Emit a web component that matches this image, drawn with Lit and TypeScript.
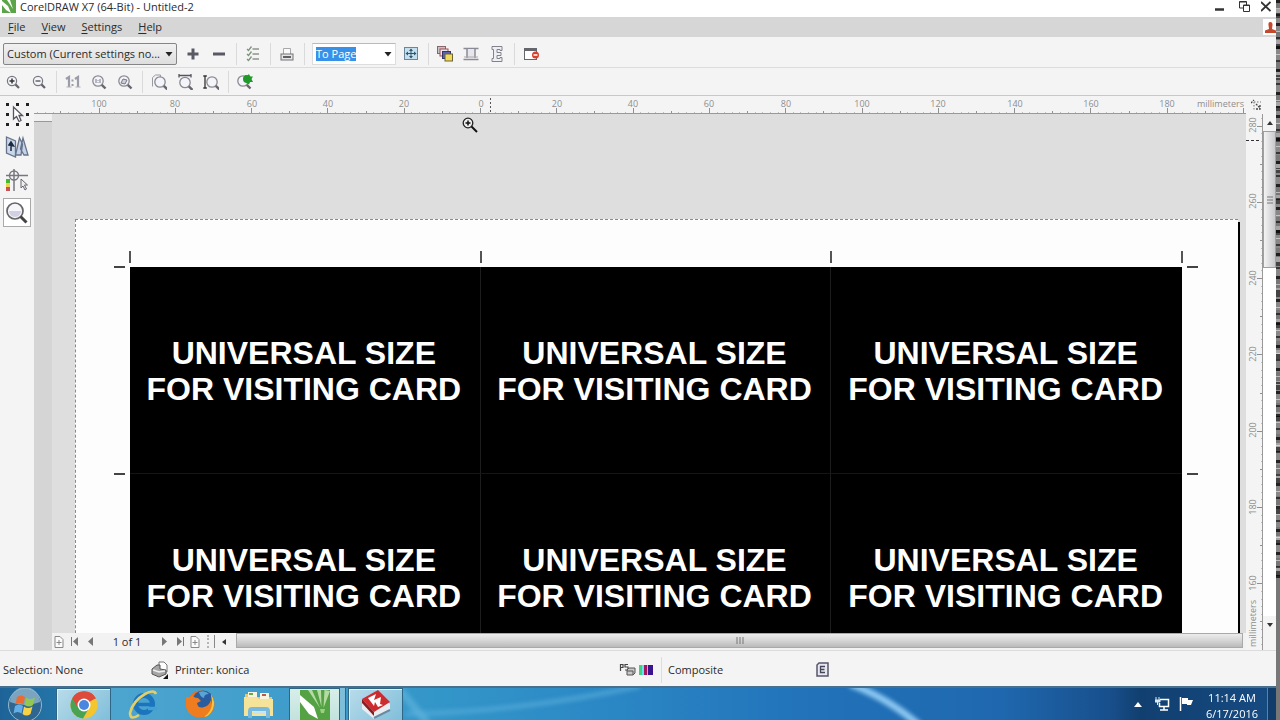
import { LitElement, html, css, svg } from "lit";
import { customElement, query } from "lit/decorators.js";

const PX_PER_20MM = 76.3;

const lens = (inner: unknown, cx = 7, cy = 7) => svg`
  <circle cx=${cx} cy=${cy} r="5.2" fill="#f4f5fb" stroke="#8a8a92" stroke-width="1.3"/>
  <path d="M${cx + 3.8} ${cy + 3.8}L${cx + 7.5} ${cy + 7.5}" stroke="#66666f" stroke-width="2.4"/>
  ${inner}`;

const smallLens = (inner: unknown) => svg`
  <circle cx="7" cy="7" r="4.6" fill="#f4f5fb" stroke="#77777f" stroke-width="1.2"/>
  <path d="M10.4 10.4L14 14" stroke="#66666f" stroke-width="2.2"/>
  ${inner}`;

const icons: Record<string, unknown> = {
  plus: svg`<path d="M8 2.500v11M2.500 8h11" stroke="#585866" stroke-width="3"/>`,
  minus: svg`<path d="M2 8h12" stroke="#585866" stroke-width="3"/>`,
  checks: svg`<path d="M7.500 3h6.500M7.500 8h6.500M7.500 13h6.500" stroke="#a5ada5" stroke-width="2"/><path d="M2 3l1.500 1.500 3-4M2 8l1.500 1.500 3-4M2 13l1.500 1.500 3-4" fill="none" stroke="#7c947c" stroke-width="1.300"/>`,
  print: svg`<path d="M4.500 8V2.500h7V8" fill="#fafafa" stroke="#a8a8a8"/><rect x="2" y="8" width="12" height="6" fill="#e6e6e6" stroke="#70707a"/><path d="M4 11h8" stroke="#333" stroke-width="1.500"/>`,
  fit: svg`<rect x="1.500" y="1.500" width="13" height="12" fill="#c4e0ef" stroke="#6a879b"/><path d="M8 3.500v8M3.500 7.500h9" stroke="#2f566c"/><path d="M8 2.500l2 2.500H6zM8 12.500l2-2.500H6zM2.500 7.500l2.500-2v4zM13.500 7.500l-2.500-2v4z" fill="#2f566c"/>`,
  layers: svg`<rect x=".5" y=".5" width="8" height="7" fill="#c9c3c6" stroke="#85666d"/><rect x="3" y="3" width="8" height="7" fill="#e9e9f4" stroke="#a44a4a"/><rect x="5.500" y="5.500" width="8" height="7" fill="#5a62b0" stroke="#30356d"/><rect x="8" y="8" width="7.500" height="7" fill="#f1d95c" stroke="#6d6435"/>`,
  bleed: svg`<path d="M.5 2.500h15M.5 13.500h15" stroke="#8b8b96" stroke-width="1.500"/><path d="M4 3h8v9H4z" fill="#e6e6ec"/><path d="M4 2v10M12 2v10" stroke="#8b8b96" stroke-width="1.500"/><path d="M1 11h14" stroke="#a9a9b2"/>`,
  emark: svg`<path d="M3 .5h10v4h-2v-1H8v3h4v3H8v3h3v-1h2v4H3v-3h1.500v-9H3z" fill="#eeeef4" stroke="#82828c"/>`,
  close: svg`<rect x="1.500" y="2.500" width="12" height="11" fill="#fff" stroke="#65656d"/><path d="M1 4h13" stroke="#65656d" stroke-width="2"/><circle cx="12.500" cy="9" r="3.500" fill="#d9402c"/><path d="M10.500 9h4" stroke="#fff" stroke-width="1.500"/>`,
  zin: smallLens(svg`<path d="M7 4.500v5M4.500 7h5" stroke="#333" stroke-width="1.500"/>`),
  zout: smallLens(svg`<path d="M4.500 7h5" stroke="#666" stroke-width="1.500"/>`),
  one: svg`<path d="M1 5l3-2v10M10 5l3-2v10" fill="none" stroke="#9c9ca9" stroke-width="2.200"/><path d="M1.500 13h5M10.500 13h5" stroke="#b0b0bb"/><path d="M7.500 5.500v2M7.500 10v2" stroke="#9c9ca9" stroke-width="2"/>`,
  zsel: lens(svg`<path d="M5 5v4M9 5v4M7 6v.8M7 8v.8" stroke="#777783"/>`),
  zpage: lens(svg`<path d="M4 9l2-4 4 1-2 4z" fill="#d0d0dc" stroke="#777783"/>`),
  zdoc: svg`<path d="M1.500 12.500v-9l3-2.500h5v4" fill="#f4f4f4" stroke="#9a9aa3"/>${lens("", 9, 8)}`,
  zwidth: svg`<path d="M2 1.500h12M2 0v3.500M14 0v3.500" stroke="#55555e" stroke-width="1.300"/>${lens("", 8, 8.5)}`,
  zheight: svg`<path d="M2 2v12M.3 2h3.500M.3 14h3.500" stroke="#333" stroke-width="1.300"/>${lens("", 9, 8)}`,
  zcolor: svg`${lens("", 6, 7)}<circle cx="10" cy="5" r="4" fill="#1f9a2a"/><path d="M8 1l2 1 2-2 1 2.500 3 0-1.500 2.500 1.500 3-3 0-1 2.500-3-2z" fill="#1f9a2a"/>`,
};

const icon = (name: string) => html`<svg class="i16" viewBox="0 0 16 16" aria-hidden="true">${icons[name]}</svg>`;
const tool = (name: string, label: string) => html`<button class="tool" aria-label=${label}>${icon(name)}</button>`;
const sep = html`<span class="sep"></span>`;

@customElement("h-ruler")
class HRuler extends LitElement {
  static styles = css`
    :host { display: block; height: 18px; background: #f4f4f4; border-bottom: 1px solid #999; box-sizing: border-box; overflow: hidden; }
    svg { display: block; width: 100%; height: 17px; font: 9px "Open Sans", sans-serif; fill: #8e8e8e; }
  `;
  render() {
    const zero = 446.5;
    const ticks = [];
    for (let mm = -116; mm <= 200; mm += 2) {
      const x = Math.floor(zero + (mm * PX_PER_20MM) / 20) + 0.5;
      const h = mm % 20 === 0 ? 5 : mm % 10 === 0 ? 2 : 1;
      ticks.push(svg`<path d="M${x} 17v${-h}" stroke=${h > 1 ? "#909090" : "#c0c0c0"}/>`);
    }
    const labels = [];
    for (let mm = -100; mm <= 180; mm += 20) {
      labels.push(svg`<text x=${Math.round(zero + (mm * PX_PER_20MM) / 20)} y="11" text-anchor="middle">${Math.abs(mm)}</text>`);
    }
    return html`<svg>${ticks}${labels}<text x="1210" y="11" text-anchor="end">millimeters</text>
      <path d="M456.500 2v15" stroke="#555" stroke-dasharray="2 2"/></svg>`;
  }
}

@customElement("v-ruler")
class VRuler extends LitElement {
  static styles = css`
    :host { display: block; background: #f4f4f4; border-right: 1px solid #999; box-sizing: border-box; overflow: hidden; position: relative; }
    svg { position: absolute; inset: 0; width: 100%; height: 100%; font: 9px "Open Sans", sans-serif; fill: #8e8e8e; }
  `;
  render() {
    const top = 12;
    const ticks = [];
    for (let mm = 282; mm >= 144; mm -= 2) {
      const y = Math.floor(top + ((280 - mm) * PX_PER_20MM) / 20) + 0.5;
      const w = mm % 20 === 0 ? 5 : mm % 10 === 0 ? 2 : 1;
      ticks.push(svg`<path d="M16 ${y}h${-w}" stroke=${w > 1 ? "#909090" : "#c0c0c0"}/>`);
    }
    const labels = [];
    for (let mm = 280; mm >= 160; mm -= 20) {
      const y = Math.round(top + ((280 - mm) * PX_PER_20MM) / 20);
      labels.push(svg`<text transform="translate(10 ${y - 1}) rotate(-90)" text-anchor="middle">${mm}</text>`);
    }
    return html`<svg>${ticks}${labels}<text transform="translate(10 533) rotate(-90)">millimeters</text>
      <path d="M0 26.500h15" stroke="#333" stroke-dasharray="3 2"/></svg>`;
  }
}

@customElement("print-sheet")
class PrintSheet extends LitElement {
  static styles = css`
    :host { display: block; box-sizing: border-box; height: 640px; background: #fdfdfd; border: 1px dashed #8a8a8a; border-right: 0; box-shadow: 2px 3px 0 #000; padding: 31px 40px 0 38px; }
    .row { display: grid; grid-template-columns: 16px 1fr 16px; }
    .ticks { display: flex; justify-content: space-between; height: 12px; grid-column: 2; margin: 0 -1px 4px -1px; }
    .v { width: 2px; background: #555; }
    .h { height: 2px; width: 11px; background: #444; margin-top: -1px; }
    .right { justify-self: end; }
    .cards { display: grid; grid-template-columns: repeat(3, 1fr); background: #000; }
    .card { box-sizing: border-box; height: 207px; padding: 1px 2px 0 0; border-right: 1px solid #1d1d1d; border-bottom: 1px solid #151515; display: flex; align-items: center; justify-content: center; text-align: center; color: #fff; font: bold 32px/36px "Liberation Sans", Arial, sans-serif; white-space: nowrap; }
    .card:last-child { border-right: 0; }
  `;
  render() {
    const row = html`<div class="row"><span class="h"></span>
      <div class="cards">${[0, 1, 2].map(() => html`<div class="card">UNIVERSAL SIZE<br>FOR VISITING CARD</div>`)}</div>
      <span class="h right"></span></div>`;
    return html`<div class="row"><div class="ticks">${[0, 1, 2, 3].map(() => html`<span class="v"></span>`)}</div></div>${row}${row}`;
  }
}

@customElement("task-bar")
class TaskBar extends LitElement {
  static styles = css`
    :host { display: grid; height: 34px; box-sizing: border-box; border-top: 2px solid #486f8c; overflow: hidden; font: 11px/16px "Open Sans", sans-serif; color: #fff;
      background: linear-gradient(90deg, #1d6397 0, #2474a8 55px, #4ea6cf 90px, #3f9ccb 300px, #3396c9 440px, #2b86c4 620px, #2273ba 800px, #1f68af 1000px, #184f8c 1110px, #113f70 1140px, #164b82 1276px); }
    .glow, .bar { grid-area: 1 / 1; min-width: 0; }
    .glow { width: 100%; height: 32px; }
    .bar { display: flex; height: 32px; }
    button { appearance: none; border: 0; padding: 0; background: none; box-sizing: border-box; height: 32px; width: 58px; display: grid; place-items: center; }
    svg { display: block; overflow: hidden; }
    .start { width: 56px; padding-right: 6px; }
    .on { width: 55px; background: linear-gradient(135deg, #b9dcea, #7fbeda); border: 1px solid #2f6685; border-bottom: 0; box-shadow: inset 1px 1px 0 #d9f2fb; }
    .first { margin-right: 3px; }
    .active { width: 51px; background: linear-gradient(#d8eee9, #c2e2dd); border: 1px solid #2f6685; border-bottom: 0; margin-left: 1px; }
    .stack { margin: 0 2px 0 0; width: 5px; border-right: 1px solid #2f6685; background: #7fbeda; }
    .tray { margin-left: auto; display: flex; align-items: center; }
    .tray button { width: 24px; }
    .clock { text-align: center; line-height: 16px; width: 60px; padding-top: 3px; margin: 0 5px 0 4px; }
    .desk { border-left: 1px solid #5585ad; width: 8px; height: 32px; background: #123d6b; }
  `;
  render() {
    return html`
      <svg class="glow" aria-hidden="true">
        <defs><filter id="b"><feGaussianBlur stdDeviation="2"/></filter></defs>
        <g filter="url(#b)" fill="none">
          <path d="M850 -4Q888 10 920 38" stroke="#8cc8f2" stroke-width="7"/>
          <path d="M405 26Q520 24 640 -2" stroke="#54aad8" stroke-width="5" opacity=".7"/>
          <path d="M400 2L428 36" stroke="#62b6dd" stroke-width="8" opacity=".6"/>
        </g>
      </svg>
      <div class="bar">
        <button class="start" aria-label="Start"><svg width="36" height="32" viewBox="0 0 36 32">
          <circle cx="18" cy="17" r="16.500" fill="#2f668f" stroke="#93b9cf"/><path d="M3 14a15 15 0 0 1 30 0q-15 6-30 0z" fill="#8db4ca" opacity=".8"/>
          <path d="M10 9q4-3 8 0l-1.500 7.500q-4-3-8 0z" fill="#ea6c33"/><path d="M19 9.500q4 3 9 0l-2 7.500q-4 3-8.500 0z" fill="#92c750"/>
          <path d="M8 18q4-3 8 0l-1.500 7.500q-4-3-8 0z" fill="#62aee8"/><path d="M17 18.500q4 3 8.500 0l-2 7.500q-4 3-8 0z" fill="#f7d148"/></svg></button>
        <button class="on first" aria-label="Chrome"><svg width="28" height="28" viewBox="0 0 28 28">
          <circle cx="14" cy="14" r="13.500" fill="#f3c62f"/><path d="M14 14L2.300 7.200A13.500 13.500 0 0 1 25.700 7.200z" fill="#dc4b3c"/><path d="M2.300 7.200A13.500 13.500 0 0 0 13 27.500L19 17z" fill="#4aa353"/><path d="M14 7.500h12A13.500 13.500 0 0 0 2.300 7.200L8 17z" fill="#dc4b3c"/>
          <circle cx="14" cy="14" r="6.500" fill="#fff"/><circle cx="14" cy="14" r="5" fill="#4a86e0"/></svg></button>
        <button aria-label="Internet Explorer"><svg width="30" height="30" viewBox="0 0 30 30">
          <circle cx="16" cy="15" r="8.500" fill="none" stroke="#1b74bd" stroke-width="5"/><path d="M10 15.500h17" stroke="#1b74bd" stroke-width="3.500"/><path d="M20 19.500h9" stroke="#43a0d2" stroke-width="3.500"/>
          <path d="M28 5q-2-5-11 0Q5 12 2 24q0 8 9 2" fill="none" stroke="#e2cf69" stroke-width="2.600"/></svg></button>
        <button aria-label="Firefox"><svg width="30" height="30" viewBox="0 0 30 30">
          <circle cx="15" cy="15" r="13.500" fill="#e8701d"/><circle cx="17" cy="12" r="10.500" fill="#2a5ca0"/><path d="M13 3q6-2 10 2-5 0-5 4-4-1-5-6z" fill="#58a5d6"/>
          <path d="M2 8q3 1 4-3 1 4 6 4l3 3-4 2q1 6 7 4 5-1 7-7 4 12-5 16-10 4-17-3-5-6-3-15z" fill="#ef7d1f"/><path d="M25 5q5 8 2 15-3 7-9 8 8-6 8-14z" fill="#f8c33a"/></svg></button>
        <button aria-label="Explorer"><svg width="32" height="30" viewBox="0 0 32 30">
          <path d="M2 5h10l2 3h15v19H2z" fill="#e4c96b"/><path d="M5 3h9v6H5zM17 4h9v6h-9z" fill="#f8f4e0"/><path d="M6 4h4v2H6z" fill="#6aa84f"/><path d="M19 5h4v2h-4z" fill="#c05848"/>
          <path d="M1 8h13l2 2h14v17H1z" fill="#f6e39a"/><path d="M7 29v-7q0-2 2-2h14q2 0 2 2v7" fill="none" stroke="#7ab9de" stroke-width="4"/><path d="M10 24h12" stroke="#c3e4f5" stroke-width="2"/></svg></button>
        <button class="active" aria-label="CorelDRAW"><svg width="30" height="30" viewBox="0 0 30 30">
          <path d="M0 0h30v30H0z" fill="#55a244"/><path d="M0 5l14 12 4 12-9-5L0 12z" fill="#fff"/><path d="M8 0l12 18L12 0zM17 0l4.500 17L21 0zM30 1l-6.500 17 1-18z" fill="#b5dba4"/><path d="M20 19h5l-1 4h-3z" fill="#9bcf86"/></svg></button>
        <span class="stack"></span>
        <button class="on" aria-label="Graphics app"><svg width="32" height="30" viewBox="0 0 32 30">
          <path d="M2 12l17-10 11 12v7L14 29 2 19z" fill="#e8edf2"/><path d="M14 28l16-8" stroke="#6889a0" stroke-width="2"/><path d="M2 9L18 0l12 12-16 10z" fill="#cf2a2e"/><path d="M2 9l12 13v4L2 13z" fill="#8d1c22"/><path d="M8 8l8-4-2 6 7-3-1 7 3 1-5 2-3-5-1 4z" fill="#fff"/></svg></button>
        <div class="tray">
          <button aria-label="Show hidden icons"><svg width="8" height="5"><path d="M4 0l4 5H0z" fill="#fff"/></svg></button>
          <button aria-label="Network"><svg width="15" height="14" viewBox="0 0 15 14"><path d="M5 2.500h8.500v7H4.500V6" fill="none" stroke="#fff" stroke-width="1.500"/><path d="M5 13h8M9 10v3" stroke="#fff" stroke-width="1.500"/><path d="M1 0v3M4 0v3M0 3h5v2H0zM2.500 5v3" stroke="#dfe9f3" fill="#dfe9f3"/></svg></button>
          <button aria-label="Action Center"><svg width="15" height="14" viewBox="0 0 15 14"><path d="M1.500 0v14" stroke="#fff" stroke-width="1.500"/><path d="M3 1h6v2h5l-2 5H8V7H3z" fill="#fff"/></svg></button>
          <div class="clock">11:14 AM<br>6/17/2016</div>
          <span class="desk"></span>
        </div>
      </div>`;
  }
}

@customElement("app-root")
class AppRoot extends LitElement {
  static styles = css`
    :host { display: flex; height: 100vh; overflow: hidden; background: #f4f4f4; color: #2b2b2b; font: 11px/16px "Open Sans", sans-serif; }
    .app { flex: 1; min-width: 0; display: flex; flex-direction: column; }
    .edge { width: 4px; background:
      linear-gradient(transparent 578px, #777 578px),
      repeating-linear-gradient(rgba(0,0,0,.75) 0 3px, transparent 3px 8px, rgba(255,255,255,.5) 8px 9px, transparent 9px 14px, rgba(0,0,0,.6) 14px 16px, transparent 16px 23px),
      repeating-linear-gradient(#777 0 9px, #a4a4a4 9px 13px, #444 13px 18px, #888 18px 31px); }
    button { appearance: none; background: none; border: 0; padding: 0; margin: 0; font: inherit; color: inherit; display: grid; place-items: center; }
    svg { display: block; }
    .i16 { width: 16px; height: 16px; }
    .title { height: 17px; background: #fff; display: flex; align-items: flex-start; gap: 4px; padding-left: 2px; line-height: 14px; }
    .win { margin-left: auto; display: flex; }
    .win button { width: 24px; height: 14px; }
    .win button:last-child { width: 20px; }
    .menu { height: 20px; background: #d6d6d6; display: flex; align-items: center; }
    .menu button { padding: 0 8px; }
    .menu u { text-underline-offset: 2px; }
    .menu .user { margin-left: auto; padding: 0; width: 13px; height: 16px; background: #fff; }
    .bar { display: flex; align-items: center; box-sizing: border-box; border-bottom: 1px solid #dcdcdc; }
    .bar1 { height: 31px; padding: 4px 0 0 3px; }
    .bar2 { height: 28px; border-bottom-color: #c8c8c8; }
    .tool { width: 26px; height: 24px; }
    .sep { width: 1px; height: 22px; margin: 0 3px 0 4px; background: #dadada; }
    .preset { display: grid; width: 174px; margin-right: 3px; align-items: center; }
    .preset select { grid-area: 1 / 1; appearance: none; box-sizing: border-box; width: 100%; height: 22px; border: 1px solid #858585; border-radius: 2px; background: linear-gradient(#f1f1f1, #dedede); font: inherit; color: inherit; padding: 0 0 0 3px; }
    .preset svg { grid-area: 1 / 1; justify-self: end; margin-right: 4px; pointer-events: none; }
    .zoom { display: flex; box-sizing: border-box; width: 84px; height: 22px; margin: 0 2px 0 4px; background: #fff; border: 1px solid #ddd; border-top-color: #b4bcc2; }
    .zoom input { flex: 1; min-width: 0; border: 0; outline: 0; padding: 0 0 0 3px; font: inherit; line-height: 14px; color: #222; background: none; }
    .zoom input::selection { background: #3891e9; color: #fff; }
    .zoom button { width: 14px; }
    .work { flex: 1; min-height: 0; display: grid; grid-template-columns: 34px 18px 1fr 17px 13px; grid-template-rows: 18px 1fr 17px; }
    .tools { grid-row: 1 / 4; display: flex; flex-direction: column; align-items: center; gap: 4px; padding: 3px 1px 0 0; box-sizing: border-box; }
    .tools button { width: 28px; height: 29px; box-sizing: border-box; }
    .tools .sel { background: #fff; border: 1px solid #aaa; }
    h-ruler { grid-column: 2 / 4; }
    .origin { grid-column: 4 / 6; display: flex; align-items: center; padding-left: 5px; }
    .gutter { grid-area: 2 / 2 / 4 / 3; background: #d5d5d5; }
    .stub { height: 8px; background: #f0f0f0; border-bottom: 1px solid #999; box-sizing: border-box; }
    .canvas { grid-area: 2 / 3; background: #dedede; overflow: hidden; padding: 105px 8px 0 23px; position: relative; }
    .cursor { position: absolute; left: 409px; top: 2px; }
    v-ruler { grid-area: 2 / 4 / 4 / 5; }
    .vs { grid-area: 2 / 5; display: flex; flex-direction: column; background: #fff; }
    .vs button { height: 17px; background: #f4f4f4; }
    .vthumb { height: 137px; box-sizing: border-box; border: 1px solid #a0a0a0; background: linear-gradient(90deg, #f3f3f3, #c9c9cd); display: grid; place-items: center; }
    .grow { flex: 1; }
    .nav { grid-area: 3 / 3; display: flex; min-width: 0; background: #f2f2f2; }
    .nav button { width: 16px; height: 17px; }
    .nav .add { width: 14px; }
    .pages { width: 58px; text-align: center; line-height: 18px; }
    .grip { width: 5px; margin: 2px 1px 2px 5px; border-left: 2px dotted #b5b5b5; border-right: 1px solid #888; }
    .hthumb { flex: 1; height: 15px; margin: 0 3px 0 4px; box-sizing: border-box; border: 1px solid #a9a9a9; background: linear-gradient(#ececec, #d8d8d8 45%, #bababa); display: grid; place-items: center; }
    .status { height: 36px; box-sizing: border-box; border-top: 1px solid #dcdcdc; display: flex; align-items: center; padding: 2px 3px 0; }
    .s1 { width: 148px; }
    .s2 { width: 468px; display: flex; align-items: center; gap: 7px; }
    .s3 { width: 42px; display: flex; align-items: center; gap: 3px; }
    .s4 { width: 148px; border-left: 1px solid #ddd; padding-left: 6px; line-height: 26px; }
  `;

  @query(".zoom input") zoomBox!: HTMLInputElement;

  firstUpdated() {
    this.zoomBox.focus();
    this.zoomBox.select();
  }

  render() {
    const menus = [["F", "ile"], ["V", "iew"], ["S", "ettings"], ["H", "elp"]];
    const arrow = html`<svg width="8" height="5" aria-hidden="true"><path d="M.5 0h7L4 4.500z" fill="#222"/></svg>`;
    const tri = (d: string, label: string) => html`<button aria-label=${label}><svg width="9" height="9" viewBox="0 0 9 9"><path d=${d} fill="#777"/></svg></button>`;
    const addPage = html`<button class="add" aria-label="Add page"><svg width="10" height="12" viewBox="0 0 10 12"><path d="M1 .5h5l3 3v8H1zM5 4v5M2.500 6.500h5" fill="#fafafa" stroke="#888"/></svg></button>`;
    return html`
      <div class="app">
        <header class="title">
          <svg width="14" height="14" viewBox="0 0 14 14"><path d="M0 0h14v13H0z" fill="#5ba548"/><path d="M0 1l6 5 3 7-5-3-4-5zM5 0l6 9-3-9z" fill="#fff"/></svg>
          <span>CorelDRAW X7 (64-Bit) - Untitled-2</span>
          <div class="win">
            <button aria-label="Minimize"><svg width="10" height="12"><path d="M0 8.500h9" stroke="#333" stroke-width="2.500"/></svg></button>
            <button aria-label="Restore"><svg width="11" height="12"><path d="M4 7H.5V.5h7V4M.5 1h7M4.500 4h6v6.500h-6zM4.500 4.500h6" fill="none" stroke="#333"/></svg></button>
            <button aria-label="Close"><svg width="10" height="12"><path d="M0 1l9.500 9M9.500 1L0 10" stroke="#333" stroke-width="1.800"/></svg></button>
          </div>
        </header>
        <nav class="menu">
          ${menus.map(([a, b]) => html`<button><span><u>${a}</u>${b}</span></button>`)}
          <button class="user" aria-label="Account"><svg width="12" height="14"><path d="M6 2q3 0 2.500 3L8 9l4 1.500V13H1v-2.500L5 9l-.5-4Q4 2 6 2z" fill="#c3492c"/></svg></button>
        </nav>
        <div class="bar bar1">
          <label class="preset"><select aria-label="Print style"><option>Custom (Current settings no...</option></select>${arrow}</label>
          ${tool("plus", "Add print style")}${tool("minus", "Delete print style")}${sep}
          ${tool("checks", "Print options")}${sep}${tool("print", "Print")}${sep}
          <div class="zoom"><input aria-label="Zoom level" value="To Page"><button aria-label="Zoom levels">${arrow}</button></div>
          ${tool("fit", "Full screen")}${sep}
          ${tool("layers", "Separations")}${tool("bleed", "Invert")}${tool("emark", "Mirror")}${sep}${tool("close", "Close preview")}
        </div>
        <div class="bar bar2">
          ${tool("zin", "Zoom in")}${tool("zout", "Zoom out")}${sep}
          ${tool("one", "Zoom 1:1")}${tool("zsel", "Zoom to selected")}${tool("zpage", "Zoom to fit")}${sep}
          ${tool("zdoc", "Zoom to page")}${tool("zwidth", "Zoom to width")}${tool("zheight", "Zoom to height")}${sep}
          ${tool("zcolor", "Color preview")}
        </div>
        <main class="work">
          <div class="tools">
            <button aria-label="Pick tool"><svg width="24" height="24" viewBox="0 0 24 24"><path d="M1 1h3v3H1zM11 1h3v3h-3zM21 1h3v3h-3zM1 11h3v3H1zM21 11h3v3h-3zM1 21h3v3H1zM11 21h3v3h-3zM21 21h3v3h-3z" fill="#222"/><path d="M8.500 5v12l3-2.500 2.500 5 2-1-2-5h3.500z" fill="#fff" stroke="#555560" stroke-width="1.300"/></svg></button>
            <button aria-label="Imposition"><svg width="24" height="24" viewBox="0 0 24 24"><path d="M1.500 2l9 4v16l-9-4z" fill="#c9d7ea" stroke="#66738a" stroke-width="1.300"/><path d="M10.500 20l4-17 3 6-1.500 11zM15.500 14l2.500-11 5 17h-4z" fill="#c5d3e8" stroke="#66738a" stroke-width="1.300"/><path d="M6 16V9M4 10l2-3 2.500 4z" stroke="#1c2940" stroke-width="1.500" fill="#1c2940"/></svg></button>
            <button aria-label="Marks placement"><svg width="24" height="24" viewBox="0 0 24 24"><path d="M1 7.500h22M9 1v22" stroke="#777780" stroke-width="1.500"/><circle cx="9" cy="7.500" r="4.500" fill="none" stroke="#777780" stroke-width="1.400"/><path d="M1 11h4v4H1z" fill="#45b82e"/><path d="M1 15h4v4H1z" fill="#ebd44c"/><path d="M1 19h4v4H1z" fill="#c95252"/><path d="M16 11v9l2-2 2 4 1.500-1-2-4h3z" fill="#eee" stroke="#666670"/></svg></button>
            <button class="sel" aria-label="Zoom tool"><svg width="24" height="24" viewBox="0 0 24 24"><circle cx="10" cy="10" r="8" fill="#f6f6fb" stroke="#666" stroke-width="1.700"/><path d="M4 10h12a6 6 0 0 1-12 0z" fill="#d1d1e2"/><path d="M15.500 15.500l6 6" stroke="#444" stroke-width="3"/></svg></button>
          </div>
          <h-ruler></h-ruler>
          <div class="origin"><svg width="10" height="12"><path d="M3 3h7M3 3v8" stroke="#777" stroke-dasharray="1.500 1.500"/><path d="M0 4l3-3M5 5l4 4M9 6v4H5" stroke="#444" fill="none" stroke-width="1.300" stroke-dasharray="2 1"/></svg></div>
          <div class="gutter"><div class="stub"></div></div>
          <div class="canvas">
            <print-sheet></print-sheet>
            <svg class="cursor" width="18" height="18" viewBox="0 0 18 18"><circle cx="7" cy="7" r="4.800" fill="#eee" stroke="#222" stroke-width="1.300"/><path d="M7 4.500v5M4.500 7h5" stroke="#111" stroke-width="1.500"/><path d="M10.500 10.500l5.500 5.500" stroke="#111" stroke-width="2"/></svg>
          </div>
          <v-ruler></v-ruler>
          <div class="vs">
            <button aria-label="Scroll up"><svg width="6" height="4"><path d="M3 0l3 4H0z" fill="#333"/></svg></button>
            <div class="vthumb"><svg width="6" height="8"><path d="M0 1h6M0 4h6M0 7h6" stroke="#777"/></svg></div>
            <span class="grow"></span>
            <button aria-label="Scroll down"><svg width="6" height="4"><path d="M0 0h6L3 4z" fill="#333"/></svg></button>
          </div>
          <div class="nav">
            ${addPage}${tri("M1 0h1v9H1zM8 0v9L3 4.500z", "First page")}${tri("M7 0v9L2 4.500z", "Previous page")}
            <span class="pages">1 of 1</span>
            ${tri("M2 0v9l5-4.500z", "Next page")}${tri("M7 0h1v9H7zM1 0v9l5-4.500z", "Last page")}${addPage}
            <span class="grip"></span>
            <button aria-label="Scroll left"><svg width="4" height="6"><path d="M4 0v6L0 3z" fill="#333"/></svg></button>
            <div class="hthumb"><svg width="8" height="7"><path d="M1 0v7M4 0v7M7 0v7" stroke="#777"/></svg></div>
          </div>
        </main>
        <footer class="status">
          <span class="s1">Selection: None</span>
          <span class="s2"><svg width="17" height="18" viewBox="0 0 17 18"><path d="M8 1h5l3 3v7H8z" fill="#fff" stroke="#777"/><path d="M1 8l5-4h3v4l6 1v4l-7 3-7-3z" fill="#a5a5a5" stroke="#555"/><path d="M2 9l6 2 6-1" stroke="#eee" fill="none" stroke-width="1.500"/><path d="M17 13v5h-5z" fill="#111"/></svg>Printer: konica</span>
          <span class="s3"><svg width="17" height="13" viewBox="0 0 17 13"><path d="M1.500 8V1.500h2.500v3H1.500M9 1.500H6v2.500h3v3H6" fill="none" stroke="#444" stroke-width="1.200"/><path d="M8 7l2-2h6v5l-2 2H8z" fill="#c8c8c8" stroke="#555"/><path d="M8 8h6v4" fill="none" stroke="#555"/></svg>
            <svg width="14" height="10"><path d="M0 0h3v10H0z" fill="#47cf7b"/><path d="M3 0h2v10H3z" fill="#63e3ee"/><path d="M5 0h3v10H5z" fill="#a0185c"/><path d="M8 0h1v10H8z" fill="#f2b52c"/><path d="M9 0h5v10H9z" fill="#3a138e"/></svg></span>
          <span class="s4">Composite</span>
          <svg width="13" height="15" viewBox="0 0 13 15"><path d="M3 1h9v13H1V3z" fill="#e8e8f0" stroke="#55556a" stroke-width="1.500"/><path d="M9 4.500H4.500v6H9M4.500 7.500h4" fill="none" stroke="#44445a" stroke-width="1.300"/></svg>
        </footer>
        <task-bar></task-bar>
      </div>
      <div class="edge"></div>`;
  }
}
